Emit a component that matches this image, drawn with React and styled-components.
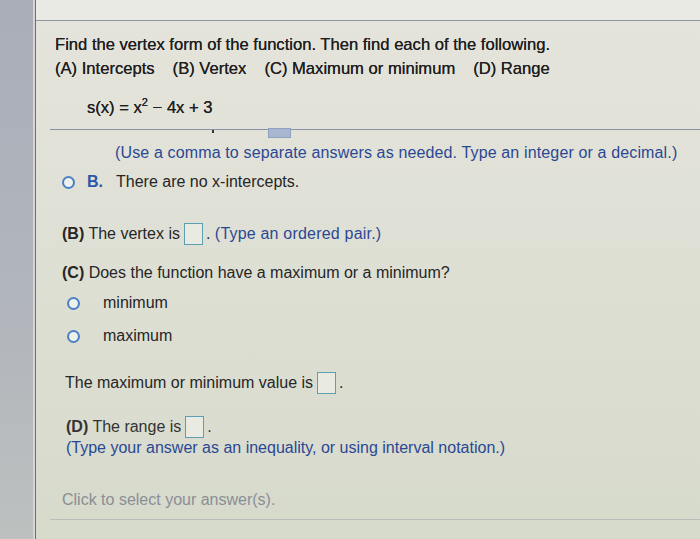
import React from "react";
import styled, { createGlobalStyle } from "styled-components";

const Global = createGlobalStyle`
  html, body { margin: 0; padding: 0; }
  body {
    width: 700px;
    height: 539px;
    overflow: hidden;
    font-family: "Liberation Sans", Arial, sans-serif;
    color: #262626;
  }
`;

const Page = styled.div`
  display: grid;
  grid-template-columns: 36px 1fr;
  width: 700px;
  height: 539px;
  background: linear-gradient(180deg, #e5e4dc 0%, #dfe0d5 45%, #d6dacb 100%);
`;

const LeftStrip = styled.div`
  background: linear-gradient(180deg, #a9aeb9 0%, #b1b5bc 55%, #bcc0bf 100%);
  border-right: 1px solid #6c6f7a;
  box-shadow: inset -2px 0 0 #d9d3d3;
`;

const Main = styled.div`
  display: flex;
  flex-direction: column;
  min-width: 0;
`;

const TopBand = styled.div`
  height: 20px;
  background: #eaeae4;
  border-bottom: 1px solid #8f94a6;
`;

const Question = styled.div`
  padding: 12px 0 0 19px;
  font-size: 16.6px;
  color: #1f1f1f;
  text-shadow: 0 0 0.4px #1f1f1f;
`;

const Line = styled.div`
  line-height: 24px;
  white-space: nowrap;
`;

const Parts = styled(Line)`
  display: flex;
  gap: 18px;
`;

const Bold = styled.span`
  font-weight: bold;
`;

const Equation = styled.div`
  margin: 17px 0 0 32px;
  line-height: 20px;
  font-size: 16.6px;
  sup {
    font-size: 11px;
    line-height: 0;
  }
`;

const Separator = styled.div`
  position: relative;
  margin-top: 11px;
  margin-left: 14px;
  border-top: 1px solid #8a90a6;
`;

const Handle = styled.div`
  position: absolute;
  left: 218px;
  top: -2px;
  width: 21px;
  height: 8px;
  background: #a8b7cf;
  border: 1px solid #8da0c0;
`;

const Dot = styled.div`
  position: absolute;
  left: 162px;
  top: 0px;
  width: 2px;
  height: 3px;
  background: #333;
`;

const Answers = styled.div`
  display: flex;
  flex-direction: column;
  padding-left: 26px;
  font-size: 16px;
`;

const Hint = styled.div`
  color: #2b4894;
  line-height: 20px;
  white-space: nowrap;
  letter-spacing: ${(p) => p.$ls || 0}px;
  margin-top: ${(p) => p.$mt || 0}px;
  margin-left: ${(p) => p.$ml || 0}px;
`;

const Row = styled.div`
  display: flex;
  align-items: center;
  line-height: 20px;
  white-space: nowrap;
  min-height: ${(p) => p.$h || 20}px;
  margin-top: ${(p) => p.$mt || 0}px;
  margin-left: ${(p) => p.$ml || 0}px;
  color: ${(p) => p.$color || "#262626"};
`;

const Radio = styled.span`
  display: inline-block;
  box-sizing: border-box;
  width: 13px;
  height: 13px;
  border-radius: 50%;
  border: 2px solid #4a80c4;
  background: #eef0ec;
  margin-right: ${(p) => p.$gap}px;
`;

const Letter = styled.span`
  color: #2d57a8;
  font-weight: bold;
  width: 29px;
`;

const Box = styled.span`
  display: inline-block;
  box-sizing: border-box;
  width: 19px;
  height: 22px;
  border: 1px solid #5c9fb2;
  background: #e9ebe2;
  margin: 0 3px 0 4px;
`;

const ClickText = styled.div`
  color: #8b8e97;
  line-height: 20px;
  margin-top: 32px;
`;

const BottomRule = styled.div`
  margin-top: 9px;
  margin-left: 14px;
  border-top: 1px solid #b8bfb8;
`;

export default function App() {
  return (
    <>
      <Global />
      <Page>
        <LeftStrip />
        <Main>
          <TopBand />
          <Question>
            <Line>Find the vertex form of the function. Then find each of the following.</Line>
            <Parts>
              <span>(A) Intercepts</span>
              <span>(B) Vertex</span>
              <span>(C) Maximum or minimum</span>
              <span>(D) Range</span>
            </Parts>
            <Equation>
              s(x) = x<sup>2</sup> − 4x + 3
            </Equation>
          </Question>
          <Separator>
            <Dot />
            <Handle />
          </Separator>
          <Answers>
            <Hint $mt={13} $ml={53} $ls={0.14}>
              (Use a comma to separate answers as needed. Type an integer or a decimal.)
            </Hint>
            <Row $mt={9}>
              <Radio $gap={12} />
              <Letter>B.</Letter>
              <span>There are no x-intercepts.</span>
            </Row>
            <Row $mt={30} $h={24}>
              <span>
                <Bold>(B)</Bold> The vertex is
              </span>
              <Box />
              <span>.&nbsp;</span>
              <Hint as="span" $ls={0.2}>(Type an ordered pair.)</Hint>
            </Row>
            <Row $mt={17}>
              <span>
                <Bold>(C)</Bold> Does the function have a maximum or a minimum?
              </span>
            </Row>
            <Row $mt={10} $ml={5}>
              <Radio $gap={23} />
              <span>minimum</span>
            </Row>
            <Row $mt={13} $ml={5}>
              <Radio $gap={23} />
              <span>maximum</span>
            </Row>
            <Row $mt={25} $h={24} $ml={3}>
              <span>The maximum or minimum value is</span>
              <Box />
              <span>.</span>
            </Row>
            <Row $mt={20} $h={23} $ml={4} $color="#333">
              <span>
                <Bold>(D)</Bold> The range is
              </span>
              <Box />
              <span>.</span>
            </Row>
            <Hint $ml={4}>(Type your answer as an inequality, or using interval notation.)</Hint>
            <ClickText>Click to select your answer(s).</ClickText>
          </Answers>
          <BottomRule />
        </Main>
      </Page>
    </>
  );
}
